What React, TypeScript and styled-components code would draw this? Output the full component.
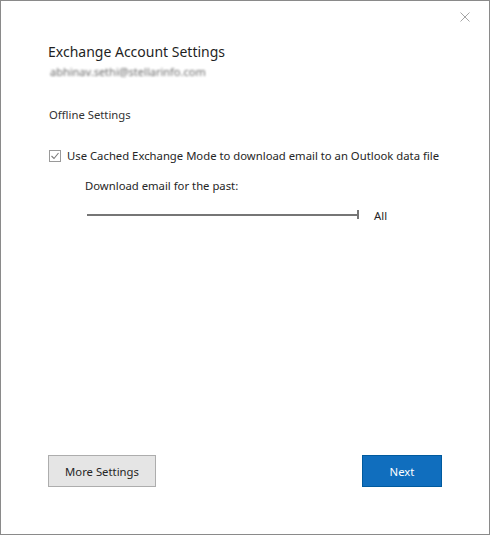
import React from "react";
import styled, { createGlobalStyle } from "styled-components";

const GlobalStyle = createGlobalStyle`
    html, body {
        margin: 0;
        padding: 0;
        background: #ffffff;
    }
    body {
        font-family: "Noto Sans", "Open Sans", sans-serif;
        color: #262626;
    }
`;

const Dialog = styled.div`
    box-sizing: border-box;
    width: 490px;
    height: 535px;
    border: 1px solid #8a8a8a;
    background: #ffffff;
    display: flex;
    flex-direction: column;
    padding: 0 47px 0 47px;
`;

const TopBar = styled.div`
    display: flex;
    justify-content: flex-end;
    height: 36px;
    margin-right: -30px;
`;

const CloseButton = styled.button`
    border: none;
    background: none;
    padding: 0;
    margin-top: 9px;
    width: 14px;
    height: 14px;
    display: flex;
    align-items: center;
    justify-content: center;
    cursor: pointer;
`;

const Title = styled.h1`
    margin: 5px 0 0 0;
    font-size: 14px;
    font-weight: 400;
    line-height: 20px;
    color: #1f1f1f;
`;

const Email = styled.div`
    margin-top: 2px;
    font-size: 11px;
    line-height: 16px;
    color: #6a6a6a;
    filter: blur(1.2px);
    padding-left: 2px;
`;

const SectionLabel = styled.div`
    margin-top: 27px;
    padding-left: 1px;
    font-size: 11.3px;
    line-height: 16px;
    color: #333333;
`;

const CheckRow = styled.label`
    display: flex;
    align-items: center;
    gap: 6px;
    margin-top: 25px;
    padding-left: 1px;
    font-size: 11.3px;
    line-height: 16px;
    white-space: nowrap;
    color: #262626;
`;

const CheckBox = styled.span`
    box-sizing: border-box;
    width: 12px;
    height: 12px;
    border: 1px solid #9a9a9a;
    display: flex;
    align-items: center;
    justify-content: center;
    flex-shrink: 0;
`;

const SubLabel = styled.div`
    margin-top: 14px;
    padding-left: 37px;
    font-size: 11.3px;
    line-height: 16px;
    color: #262626;
`;

const SliderRow = styled.div`
    display: flex;
    align-items: center;
    margin-top: 13px;
    padding-left: 39px;
    height: 16px;
`;

const Track = styled.div`
    position: relative;
    width: 272px;
    height: 2px;
    background: #767676;
`;

const Thumb = styled.span`
    position: absolute;
    right: 0;
    top: -4px;
    width: 2px;
    height: 9px;
    background: #767676;
`;

const SliderValue = styled.span`
    margin-left: 15px;
    font-size: 11.3px;
    color: #262626;
`;

const Footer = styled.div`
    margin-top: auto;
    margin-bottom: 47px;
    display: flex;
    justify-content: space-between;
    align-items: center;
`;

const Button = styled.button<{ $primary?: boolean }>`
    box-sizing: border-box;
    height: 32px;
    width: ${(p) => (p.$primary ? "80px" : "108px")};
    font-family: "Noto Sans", "Open Sans", sans-serif;
    font-size: 11.3px;
    border: 1px solid ${(p) => (p.$primary ? "#005a9e" : "#adadad")};
    background: ${(p) => (p.$primary ? "#106ebe" : "#e5e5e5")};
    color: ${(p) => (p.$primary ? "#ffffff" : "#262626")};
    padding: 0;
    cursor: pointer;
`;

export default function App() {
    return (
        <Dialog>
            <GlobalStyle />
            <TopBar>
                <CloseButton aria-label="Close">
                    <svg width="10" height="10" viewBox="0 0 10 10">
                        <path d="M0.5 0.5 L9.5 9.5 M9.5 0.5 L0.5 9.5" stroke="#a6a6a6" strokeWidth="1" fill="none" />
                    </svg>
                </CloseButton>
            </TopBar>

            <Title>Exchange Account Settings</Title>
            <Email>abhinav.sethi@stellarinfo.com</Email>

            <SectionLabel>Offline Settings</SectionLabel>

            <CheckRow>
                <CheckBox>
                    <svg width="10" height="10" viewBox="0 0 10 10">
                        <path d="M1.5 5 L4 7.5 L8.5 2" stroke="#7a7a7a" strokeWidth="1.1" fill="none" />
                    </svg>
                </CheckBox>
                Use Cached Exchange Mode to download email to an Outlook data file
            </CheckRow>

            <SubLabel>Download email for the past:</SubLabel>

            <SliderRow>
                <Track>
                    <Thumb />
                </Track>
                <SliderValue>All</SliderValue>
            </SliderRow>

            <Footer>
                <Button>More Settings</Button>
                <Button $primary>Next</Button>
            </Footer>
        </Dialog>
    );
}
